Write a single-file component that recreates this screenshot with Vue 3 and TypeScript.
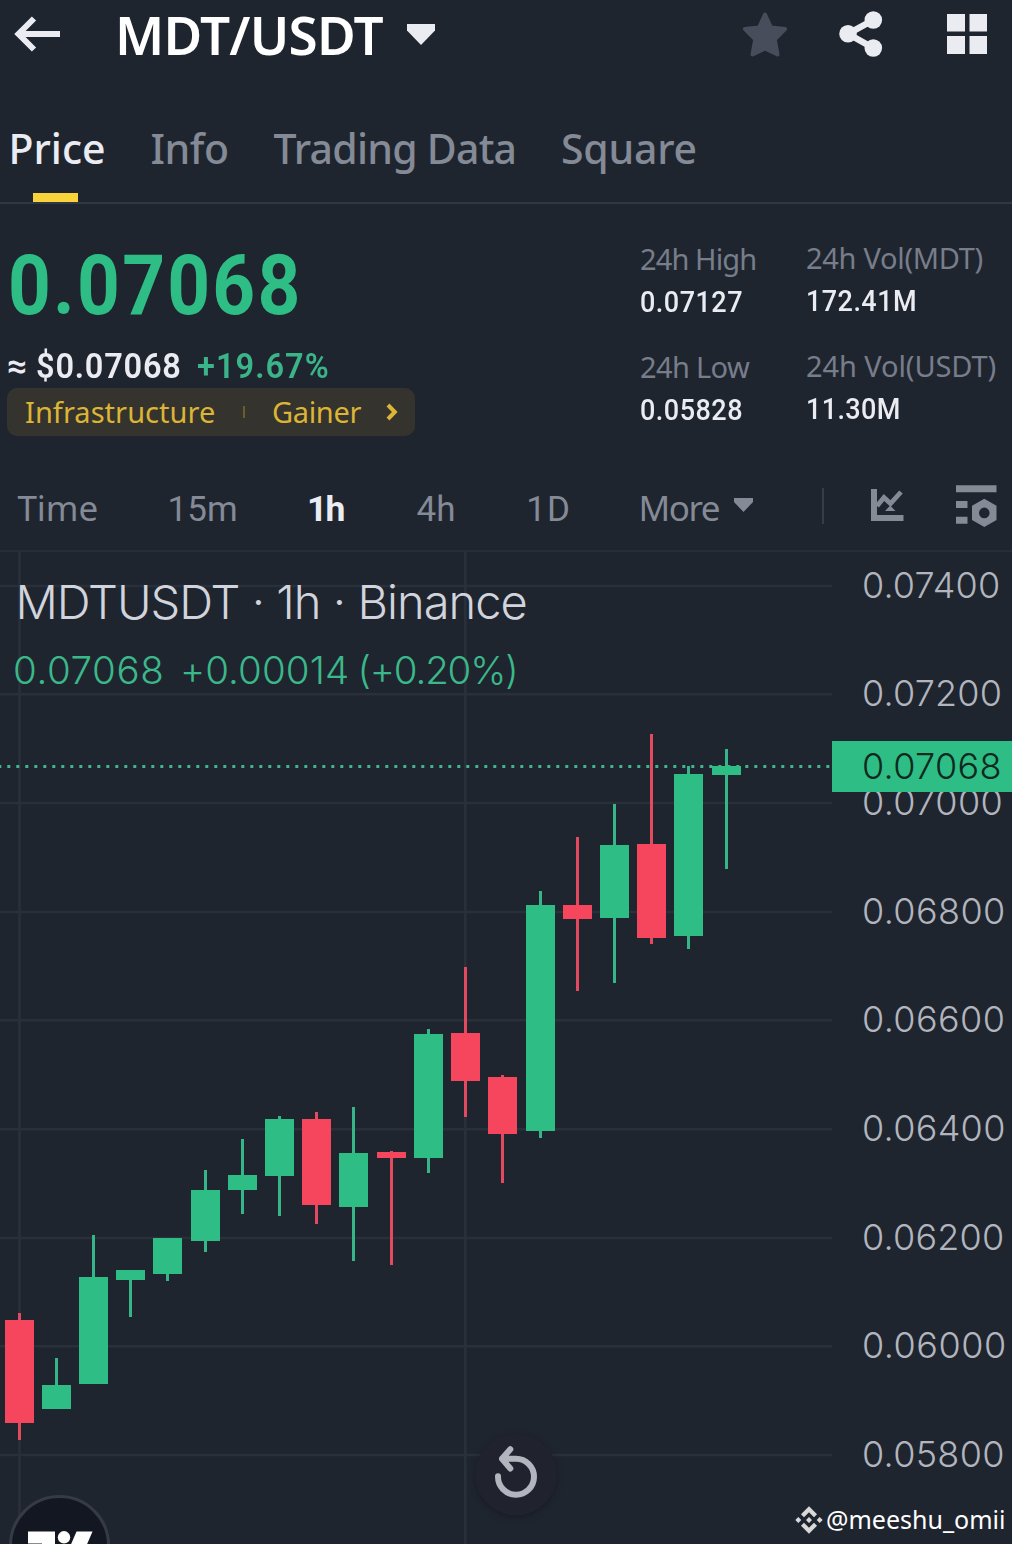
<script setup lang="ts">
interface Candle {
  x: number
  open: number
  close: number
  high: number
  low: number
  up: boolean
}

interface Label {
  text: string
  spacing: number
}

const tabs = [
  { name: 'Price', width: 142, spacing: 0, active: true },
  { name: 'Info', width: 123, spacing: -0.45, active: false },
  { name: 'Trading Data', width: 287.5, spacing: -0.75, active: false },
  { name: 'Square', width: 150, spacing: -0.25, active: false },
]

const stats = [
  [
    { label: '24h High', value: '0.07127', ls: -0.9, vs: 0.55 },
    { label: '24h Low', value: '0.05828', ls: -0.65, vs: 0.55 },
  ],
  [
    { label: '24h Vol(MDT)', value: '172.41M', ls: -0.3, vs: 0.5 },
    { label: '24h Vol(USDT)', value: '11.30M', ls: -0.1, vs: 0.4 },
  ],
]

const intervals = [
  { name: 'Time', kind: 'word', width: 150, spacing: -0.1 },
  { name: '15m', kind: 'num', width: 139.5, spacing: 0.1 },
  { name: '1h', kind: 'current-interval', width: 109.5, spacing: -1.8 },
  { name: '4h', kind: 'num', width: 109.8, spacing: 0.2 },
  { name: '1D', kind: 'num', width: 112.2, spacing: 1 },
]

const chartTop = 552

const axis: (Label & { y: number })[] = [
  { text: '0.07400', spacing: 0.15, y: 586 },
  { text: '0.07200', spacing: 0.2, y: 694.3 },
  { text: '0.07000', spacing: 0.4, y: 803 },
  { text: '0.06800', spacing: 0.4, y: 912 },
  { text: '0.06600', spacing: 0.4, y: 1020.3 },
  { text: '0.06400', spacing: 0.3, y: 1129.3 },
  { text: '0.06200', spacing: 0.2, y: 1238 },
  { text: '0.06000', spacing: 0.5, y: 1346.3 },
  { text: '0.05800', spacing: 0.3, y: 1455 },
]

const c = (x: number, open: number, close: number, high: number, low: number, up = true): Candle => ({
  x, open, close, high, low, up,
})

const candles: Candle[] = [
  c(5, 1320, 1423, 1313, 1440, false),
  c(42, 1385, 1409, 1358, 1409),
  c(79, 1277, 1384, 1235, 1384),
  c(116, 1270, 1280, 1270, 1317),
  c(153, 1238, 1274, 1238, 1281),
  c(191, 1190, 1241, 1170, 1252),
  c(228, 1175, 1190, 1139, 1214),
  c(265, 1119, 1176, 1116, 1216),
  c(302, 1119, 1205, 1112, 1224, false),
  c(339, 1153, 1207, 1107, 1261),
  c(377, 1152, 1158, 1151, 1265, false),
  c(414, 1034, 1158, 1029, 1173),
  c(451, 1033, 1081, 967, 1117, false),
  c(488, 1077, 1134, 1075, 1183, false),
  c(526, 905, 1131, 891, 1138),
  c(563, 905, 919, 837, 991, false),
  c(600, 845, 918, 804, 983),
  c(637, 844, 938, 734, 944, false),
  c(674, 774, 936, 766, 949),
  c(712, 766, 775, 749, 869),
]
</script>

<template>
  <main class="screen">
    <header class="topbar">
      <svg class="back" width="50" height="40" viewBox="0 0 50 40">
        <path d="M24 4.5 8.500 20 24 35.500M9 20H50" fill="none" stroke="#eaecf2" stroke-width="6" />
      </svg>
      <h1 class="pair">MDT/USDT</h1>
      <svg class="caret" width="28" height="21" viewBox="0 0 28 21">
        <path d="M0 0H28V6.500L14 21 0 6.500Z" fill="#eaecf2" />
      </svg>
      <div class="actions">
        <svg class="star" width="48" height="48" viewBox="0 0 48 48">
          <path
            d="M24 3.500 30 16.500 44 18 33.800 28.300 36.500 43.500 24 37.500 11.500 43.500 14.200 28.300 4 18 18 16.500Z"
            fill="#474d5b" stroke="#474d5b" stroke-width="4" stroke-linejoin="round"
          />
        </svg>
        <svg class="share" width="44" height="46" viewBox="0 0 44 46">
          <path d="M34.300 9 9 22.800 34.300 37" fill="none" stroke="#eaecf2" stroke-width="6.500" />
          <circle cx="34.300" cy="9" r="8.800" fill="#eaecf2" />
          <circle cx="9" cy="22.800" r="8.800" fill="#eaecf2" />
          <circle cx="34.300" cy="37" r="8.800" fill="#eaecf2" />
        </svg>
        <svg class="grid-icon" width="40" height="40" viewBox="0 0 40 40">
          <path d="M0 0H18V17.500H0ZM22.500 0H40V17.500H22.500ZM0 22H18V40H0ZM22.500 22H40V40H22.500Z" fill="#eaecf2" />
        </svg>
      </div>
    </header>

    <nav class="tabs">
      <span
        v-for="t in tabs" :key="t.name" class="tab" :class="{ selected: t.active }"
        :style="{ width: t.width + 'px', letterSpacing: t.spacing + 'px' }"
      >{{ t.name }}</span>
    </nav>

    <section class="summary">
      <div class="quote">
        <div class="last"><span>0.07068</span></div>
        <div class="fiat">
          <span class="approx">≈</span>
          <span class="usd"><span>$0.07068</span></span>
          <span class="change"><span>+19.67%</span></span>
        </div>
        <div class="tags">
          <span class="tag-a">Infrastructure</span>
          <i class="bar"></i>
          <span class="tag-b">Gainer</span>
          <svg width="12" height="18" viewBox="0 0 12 18">
            <path d="M2 2 8.800 9 2 16" fill="none" stroke="#dcb436" stroke-width="4" />
          </svg>
        </div>
      </div>
      <div v-for="(col, i) in stats" :key="i" class="stat-col" :class="'col-' + i">
        <div v-for="s in col" :key="s.label" class="stat">
          <div class="label" :style="{ letterSpacing: s.ls + 'px' }">{{ s.label }}</div>
          <div class="value" :style="{ letterSpacing: s.vs + 'px' }">{{ s.value }}</div>
        </div>
      </div>
    </section>

    <section class="intervals">
      <div class="interval-list">
        <span
          v-for="t in intervals" :key="t.name" :class="t.kind"
          :style="{ width: t.width + 'px', letterSpacing: t.spacing + 'px' }"
        >{{ t.name }}</span>
        <span class="word more">More</span>
      </div>
      <svg class="more-caret" width="19" height="14" viewBox="0 0 19 14">
        <path d="M0 0H19V4L9.500 14 0 4Z" fill="#848a96" />
      </svg>
      <i class="divider"></i>
      <svg class="line-icon" width="33" height="34" viewBox="0 0 33 34">
        <path d="M0 1H6V27H32.500V33H0Z" fill="#848a96" />
        <path d="M6 18 13 9.500 19.500 15.500 30 4" fill="none" stroke="#848a96" stroke-width="4.800" />
        <path d="M14 23 19.200 17.500 24.500 23Z" fill="#848a96" />
      </svg>
      <svg class="settings-icon" width="42" height="44" viewBox="0 0 42 44">
        <path d="M0 1.300H40.500V8.300H0ZM0 17H11.500V24H0ZM0 32.700H11.500V39.700H0Z" fill="#848a96" />
        <path
          d="M28.300 14.700 40.500 21.700V36L28.300 43 16 36V21.700ZM28.300 23.600A5.300 5.300 0 1 0 28.300 34.200 5.300 5.300 0 1 0 28.300 23.600Z"
          fill="#848a96" fill-rule="evenodd"
        />
      </svg>
    </section>

    <svg class="chart" width="1012" height="992" :viewBox="`0 ${chartTop} 1012 992`">
      <g stroke="#2a303a" stroke-width="2.600">
        <line v-for="a in axis" :key="a.text" x1="0" x2="832" :y1="a.y" :y2="a.y" />
        <line x1="19.500" x2="19.500" y1="551" y2="1544" />
        <line x1="465.300" x2="465.300" y1="551" y2="1544" />
      </g>

      <g class="axis">
        <text v-for="a in axis" :key="a.text" x="862" :y="a.y + 12" :letter-spacing="a.spacing">{{ a.text }}</text>
      </g>

      <line x1="-1.700" x2="832" y1="766.500" y2="766.500" stroke="#45b48c" stroke-width="3" stroke-dasharray="3 6" />

      <g v-for="k in candles" :key="k.x">
        <rect :x="k.x + 13" :y="k.high" width="3" :height="k.low - k.high" :fill="k.up ? '#36b588' : '#e44a5f'" />
        <rect :x="k.x" :y="k.open" width="29" :height="k.close - k.open" :fill="k.up ? '#2ebd85' : '#f6465d'" />
      </g>

      <rect x="832" y="741" width="180" height="51" fill="#2ebd85" />
      <text class="current" x="862" y="779" letter-spacing="0.300">0.07068</text>

      <text class="legend" x="15.500" y="619" letter-spacing="-0.960">MDTUSDT · 1h · Binance</text>
      <text class="ohlc" x="13" y="683.500" letter-spacing="0.600">0.07068</text>
      <text class="ohlc" x="180" y="683.500" letter-spacing="0.080">+0.00014</text>
      <text class="ohlc" x="357.500" y="683.500" letter-spacing="-1.150">(+0.20%)</text>

      <g>
        <circle class="reset" cx="516" cy="1474.500" r="41" fill="#20222e" />
        <path
          d="M498 1476.200A18 18 0 1 0 516 1458.700H502M510.300 1449.300 502 1458.700 510.300 1468.500"
          fill="none" stroke="#b2b5be" stroke-width="6" stroke-linecap="round" stroke-linejoin="round"
        />
      </g>

      <g>
        <circle cx="59.500" cy="1545.500" r="49" fill="#131722" stroke="#363a45" stroke-width="3" />
        <path d="M28 1531.500H55V1556H42V1543.500H28Z" fill="#fff" />
        <circle cx="64" cy="1537.300" r="6.200" fill="#fff" />
        <path d="M76.500 1531.500H92.500L82 1556H66Z" fill="#fff" />
      </g>

      <g transform="translate(809 1520)" fill="#d9d9d9">
        <path d="M0-13.700 8-5.700 5-2.700 0-7.700-5-2.700-8-5.700ZM0 13.700 8 5.700 5 2.700 0 7.700-5 2.700-8 5.700Z" />
        <path d="M0-3 3 0 0 3-3 0ZM-10.700-3-7.700 0-10.700 3-13.700 0ZM10.700-3 13.700 0 10.700 3 7.700 0Z" />
      </g>
      <text class="handle" x="826" y="1529.300">@meeshu_omii</text>
    </svg>
  </main>
</template>

<style>
body {
  background: #1f252f;
}
</style>

<style scoped>
.screen {
  width: 1012px;
  height: 1544px;
  overflow: hidden;
  background: #1f252f;
  color: #eaecf2;
  font-family: "Noto Sans", sans-serif;
  white-space: nowrap;
}

.topbar {
  display: flex;
  align-items: center;
  height: 69px;
  padding: 0 25px 0 10px;
}

.back {
  flex: none;
  margin-bottom: 1px;
}

.pair {
  margin: 0 0 0 55px;
  width: 292px;
  font-size: 53px;
  font-weight: 600;
  line-height: 70px;
  letter-spacing: -0.75px;
  color: #fff;
}

.actions {
  display: flex;
  align-items: center;
  margin-left: auto;
}

.star {
  margin-top: 1px;
}

.share {
  margin: 0 0 1px 50px;
}

.grid-icon {
  margin: 0 0 1px 64px;
}

.tabs {
  display: flex;
  box-sizing: border-box;
  height: 135px;
  padding: 54.4px 0 0 8.5px;
  border-bottom: 2px solid #323843;
  font-size: 41px;
  font-weight: 500;
  line-height: 50px;
  color: #848a96;
}

.tab {
  flex: none;
}

.tab.selected {
  color: #eaecf2;
}

.tab.selected::after {
  content: "";
  display: block;
  width: 45px;
  height: 9px;
  margin: 19.6px 0 0 24.5px;
  background: #f8d33a;
}

.summary {
  display: flex;
  height: 263px;
}

.quote {
  width: 640px;
  padding-top: 41.6px;
  font-family: Roboto, sans-serif;
}

.last {
  height: 80px;
  padding-left: 8px;
  font-size: 83px;
  font-weight: 700;
  line-height: 80px;
  letter-spacing: 2.5px;
  color: #2ebd85;
}

.last span,
.usd span,
.change span {
  display: inline-block;
  transform: scaleX(0.9);
  transform-origin: 0 0;
}

.fiat {
  display: flex;
  height: 44px;
  margin-top: 19px;
  padding-left: 7px;
  font-size: 35px;
  font-weight: 600;
  line-height: 44px;
}

.approx {
  width: 29px;
}

.usd {
  width: 161px;
  letter-spacing: 0.85px;
}

.change {
  color: #3cb489;
  letter-spacing: 1.1px;
}

.usd span,
.change span {
  transform: scaleX(0.93);
}

.tags {
  display: flex;
  align-items: center;
  box-sizing: border-box;
  width: 408px;
  height: 48px;
  margin: -0.6px 0 0 7px;
  padding-left: 18px;
  border-radius: 10px;
  background: #35332d;
  color: #dcb436;
  font: 400 29px/46px "Noto Sans", sans-serif;
}

.tag-a {
  width: 217.5px;
  letter-spacing: 0.05px;
}

.bar {
  width: 2px;
  height: 12px;
  background: #6b5b2d;
}

.tag-b {
  width: 114px;
  margin-left: 27.5px;
  letter-spacing: -0.35px;
}

.stat-col {
  padding-top: 35.3px;
  width: 166px;
}

.stat-col.col-1 {
  padding-top: 34.3px;
}

.stat {
  height: 108px;
}

.label {
  height: 40px;
  font-size: 29px;
  line-height: 40px;
  color: #777d8a;
}

.value {
  height: 40px;
  margin-top: 2.500px;
  font: 500 30px/40px Roboto, sans-serif;
  transform: scaleX(0.9);
  transform-origin: 0 0;
}

.intervals {
  display: flex;
  align-items: center;
  box-sizing: border-box;
  height: 85px;
  padding-left: 17.500px;
  border-bottom: 2px solid #272d37;
}

.interval-list {
  display: flex;
  align-items: baseline;
  width: 716px;
  color: #848a96;
  font-size: 35px;
  line-height: 48px;
}

.interval-list span {
  flex: none;
}

.num {
  font-family: Roboto, sans-serif;
}

.interval-list .current-interval {
  font-family: Roboto, sans-serif;
  font-size: 35.5px;
  font-weight: 700;
  color: #eaecf2;
}

.more {
  letter-spacing: -1.5px;
}

.more-caret {
  margin-bottom: 8px;
}

.divider {
  width: 2px;
  height: 36px;
  margin: 0 47px 5px 69px;
  background: #373d48;
}

.line-icon {
  margin-bottom: 7px;
}

.settings-icon {
  margin-left: 52.5px;
  margin-bottom: 5px;
}

.chart {
  display: block;
  overflow: visible;
}

.axis text,
.current {
  font: 300 36px Inter, sans-serif;
  fill: #b2b5be;
}

.chart .current {
  fill: #10291f;
}

.legend {
  font: 300 47px Inter, sans-serif;
  fill: #d1d4dc;
}

.ohlc {
  font: 300 38.5px Inter, sans-serif;
  fill: #3bb88a;
}

.reset {
  filter: drop-shadow(0 2px 3px rgba(10, 12, 20, 0.4));
}

.handle {
  font: 400 25px "Noto Sans", sans-serif;
  fill: #fff;
}
</style>
